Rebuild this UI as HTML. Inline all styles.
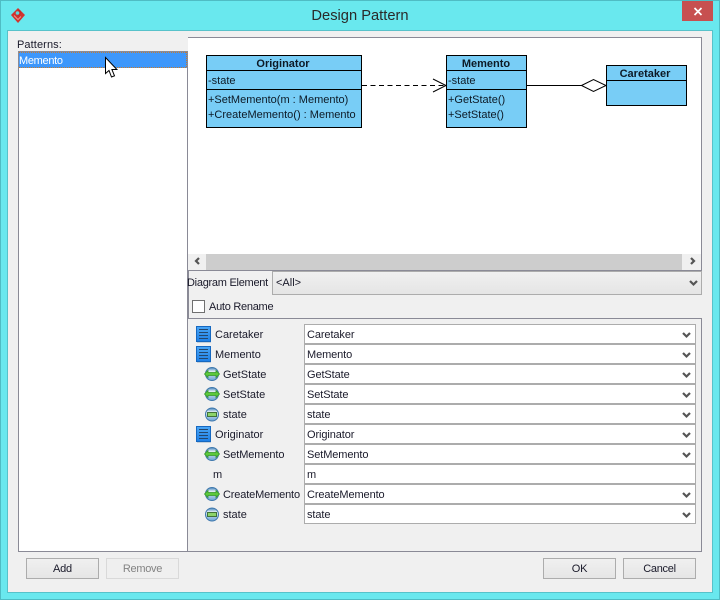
<!DOCTYPE html>
<html><head><meta charset="utf-8"><style>
*{box-sizing:border-box}
html,body{margin:0;padding:0}
body{width:720px;height:600px;position:relative;overflow:hidden;background:#69e8ee;font-family:"Liberation Sans",sans-serif;font-size:11px;color:#1a1a2a}
div{position:absolute}
.t{white-space:nowrap;line-height:14px;height:14px}
.f{left:304px;width:392px;height:20px;background:#fff;border:1px solid #acacac;padding-left:2px;line-height:20px;white-space:nowrap;letter-spacing:-.1px}
.btn{top:558px;width:73px;height:21px;border:1px solid #acacac;background:linear-gradient(#f0f0f0,#e5e5e5);text-align:center;line-height:20px;letter-spacing:-.2px}
svg{position:absolute;left:0;top:0}
</style></head><body>
<div style="left:0;top:0;width:720px;height:600px;border:1px solid #4fbcc4"></div>
<div style="left:7px;top:30px;width:706px;height:563px;background:#f0f0f0;border:1px solid #57c2ca"></div>
<div style="left:682px;top:1px;width:31px;height:20px;background:#c75050"></div>
<div class="t" style="left:0;width:720px;top:8px;height:17px;line-height:17px;text-align:center;font-size:14.7px;color:#2a2a2a">Design Pattern</div>

<div class="t" style="left:17px;top:38px;letter-spacing:.1px">Patterns:</div>
<div style="left:18px;top:51px;width:171px;height:501px;background:#fff;border:1px solid #8a8a96;border-right:2px solid #8a8a96"></div>
<div style="left:19px;top:52px;width:168px;height:16px;background:repeating-linear-gradient(90deg,#c87b2e 0 1px,#3d97fb 1px 2px)"></div>
<div style="left:19px;top:53px;width:168px;height:14px;background:#3d97fb"></div>
<div style="left:19px;top:67px;width:168px;height:1px;background:repeating-linear-gradient(90deg,#c87b2e 0 1px,#3d97fb 1px 2px)"></div>
<div style="left:186px;top:52px;width:1px;height:16px;background:repeating-linear-gradient(#c87b2e 0 1px,#3d97fb 1px 2px)"></div>
<div class="t" style="left:19px;top:54px;line-height:14px;color:#fff;letter-spacing:-.3px">Memento</div>

<div style="left:188px;top:37px;width:514px;height:234px;background:#fff;border:1px solid #8a8a96;border-left:0"></div>
<div style="left:188px;top:254px;width:513px;height:16px;background:#f0f0f0"></div>
<div style="left:206px;top:254px;width:476px;height:16px;background:#cdcdcd"></div>

<div class="t" style="left:187px;top:276px;letter-spacing:-.27px">Diagram Element</div>
<div class="t" style="left:272px;top:271px;width:430px;height:24px;line-height:23px;border:1px solid #acacac;background:linear-gradient(#f0f0f0,#e5e5e5);padding-left:3px">&lt;All&gt;</div>
<div style="left:192px;top:300px;width:13px;height:13px;background:#fff;border:1px solid #707070"></div>
<div class="t" style="left:209px;top:300px;letter-spacing:-.27px">Auto Rename</div>

<div style="left:188px;top:318px;width:514px;height:234px;background:#f0f0f0;border:1px solid #8a8a96;border-left:0"></div>
<div class="f" style="top:324px">Caretaker</div>
<div class="f" style="top:344px">Memento</div>
<div class="f" style="top:364px">GetState</div>
<div class="f" style="top:384px">SetState</div>
<div class="f" style="top:404px">state</div>
<div class="f" style="top:424px">Originator</div>
<div class="f" style="top:444px">SetMemento</div>
<div class="f" style="top:464px">m</div>
<div class="f" style="top:484px">CreateMemento</div>
<div class="f" style="top:504px">state</div>
<div class="t" style="left:215px;top:328px">Caretaker</div>
<div class="t" style="left:215px;top:348px">Memento</div>
<div class="t" style="left:223px;top:368px">GetState</div>
<div class="t" style="left:223px;top:388px">SetState</div>
<div class="t" style="left:223px;top:408px">state</div>
<div class="t" style="left:215px;top:428px">Originator</div>
<div class="t" style="left:223px;top:448px;letter-spacing:-.1px">SetMemento</div>
<div class="t" style="left:213px;top:468px">m</div>
<div class="t" style="left:223px;top:488px;letter-spacing:-.15px">CreateMemento</div>
<div class="t" style="left:223px;top:508px">state</div>

<div class="btn" style="left:26px">Add</div>
<div class="btn" style="left:106px;color:#838383;border-color:#d9d9d9;background:#efefef;letter-spacing:-.3px">Remove</div>
<div class="btn" style="left:543px">OK</div>
<div class="btn" style="left:623px;letter-spacing:-.3px">Cancel</div>

<svg width="720" height="600" viewBox="0 0 720 600" font-family="Liberation Sans, sans-serif" font-size="11">
<defs>
<linearGradient id="b" x1="0" y1="0" x2="0" y2="1"><stop offset="0" stop-color="#4aa6f6"/><stop offset="1" stop-color="#1e7fe6"/></linearGradient>
<linearGradient id="s" x1="0" y1="0" x2="0" y2="1"><stop offset="0" stop-color="#3a7db8"/><stop offset=".3" stop-color="#e4eef6"/><stop offset="1" stop-color="#6ba4d6"/></linearGradient>
<g id="cls"><rect x="1" y="1" width="14" height="16" fill="#9fb4c8" opacity=".55"/><rect x="0.5" y="0.5" width="14" height="15" fill="url(#b)" stroke="#1668c0"/><path d="M3 3.5h9M3 6.5h9M3 9.5h9M3 12.5h9" stroke="#23476e" fill="none"/></g>
<g id="op"><circle cx="8" cy="7" r="6.5" fill="url(#s)" stroke="#3f78ad"/><path d="M0.5 7l3.5-3.5v2h8v-2l3.5 3.5-3.5 3.5v-2h-8v2z" fill="#5cc83c" stroke="#35962a" stroke-width=".8"/></g>
<g id="at"><circle cx="7" cy="6.5" r="6.5" fill="url(#s)" stroke="#3f78ad"/><rect x="2.5" y="4.5" width="9" height="4" fill="#8cd46a" stroke="#35682c" stroke-width=".9"/></g>
</defs>

<path d="M18 8l7 7-7 8-7-8z" fill="#d0342f"/>
<path d="M18 9.5a4 4 0 0 1 3.5 3.5l-3.5 4z" fill="#c62b28"/>
<circle cx="17.5" cy="13" r="1.8" fill="#5ed8df"/>
<path d="M14 15.5l4 4 3-3" stroke="#f3c0b8" stroke-width=".7" fill="none"/>

<path d="M694.5 8l7 7M701.5 8l-7 7" stroke="#fff" stroke-width="1.7" fill="none"/>

<g stroke="#000" fill="#78cdf6">
<rect x="206.5" y="55.5" width="155" height="72"/><path d="M206.5 70.5h155M206.5 89.5h155" fill="none"/>
<rect x="446.5" y="55.5" width="80" height="72"/><path d="M446.5 70.5h80M446.5 89.5h80" fill="none"/>
<rect x="606.5" y="65.5" width="80" height="40"/><path d="M606.5 80.5h80" fill="none"/>
</g>
<path d="M362 85.5h84" stroke="#000" stroke-dasharray="5 3.5" fill="none"/>
<path d="M433 79l13 6.5-13 6.5" stroke="#000" fill="none"/>
<path d="M527 85.5h54.5" stroke="#000" fill="none"/>
<path d="M581.5 85.5l12-6 12.5 6-12.5 6z" stroke="#000" fill="#fff"/>
<g fill="#0d1a26">
<text x="283" y="67" text-anchor="middle" font-weight="bold">Originator</text>
<text x="208" y="84">-state</text>
<text x="208" y="103">+SetMemento(m : Memento)</text>
<text x="208" y="118">+CreateMemento() : Memento</text>
<text x="486" y="67" text-anchor="middle" font-weight="bold">Memento</text>
<text x="448" y="84">-state</text>
<text x="448" y="103">+GetState()</text>
<text x="448" y="118">+SetState()</text>
<text x="645" y="77" text-anchor="middle" font-weight="bold">Caretaker</text>
</g>

<path d="M199 258l-3 3 3 3" stroke="#555" stroke-width="2.2" fill="none"/>
<path d="M691 258l3 3-3 3" stroke="#555" stroke-width="2.2" fill="none"/>
<path d="M690 281l3.5 3.5 3.5-3.5" stroke="#555" stroke-width="2.2" fill="none"/>
<g stroke="#555" stroke-width="2.2" fill="none">
<path d="M683 333l3.5 3.5 3.5-3.5"/><path d="M683 353l3.5 3.5 3.5-3.5"/><path d="M683 373l3.5 3.5 3.5-3.5"/><path d="M683 393l3.5 3.5 3.5-3.5"/><path d="M683 413l3.5 3.5 3.5-3.5"/><path d="M683 433l3.5 3.5 3.5-3.5"/><path d="M683 453l3.5 3.5 3.5-3.5"/><path d="M683 493l3.5 3.5 3.5-3.5"/><path d="M683 513l3.5 3.5 3.5-3.5"/>
</g>

<use href="#cls" x="196" y="326"/>
<use href="#cls" x="196" y="346"/>
<use href="#op" x="204" y="367"/>
<use href="#op" x="204" y="387"/>
<use href="#at" x="205" y="408"/>
<use href="#cls" x="196" y="426"/>
<use href="#op" x="204" y="447"/>
<use href="#op" x="204" y="487"/>
<use href="#at" x="205" y="508"/>

<path d="M105.5 57.5v16l3.5-3 2.5 6.5 3-1.2-2.6-6.3h5z" fill="#fff" stroke="#000"/>
</svg>
</body></html>
